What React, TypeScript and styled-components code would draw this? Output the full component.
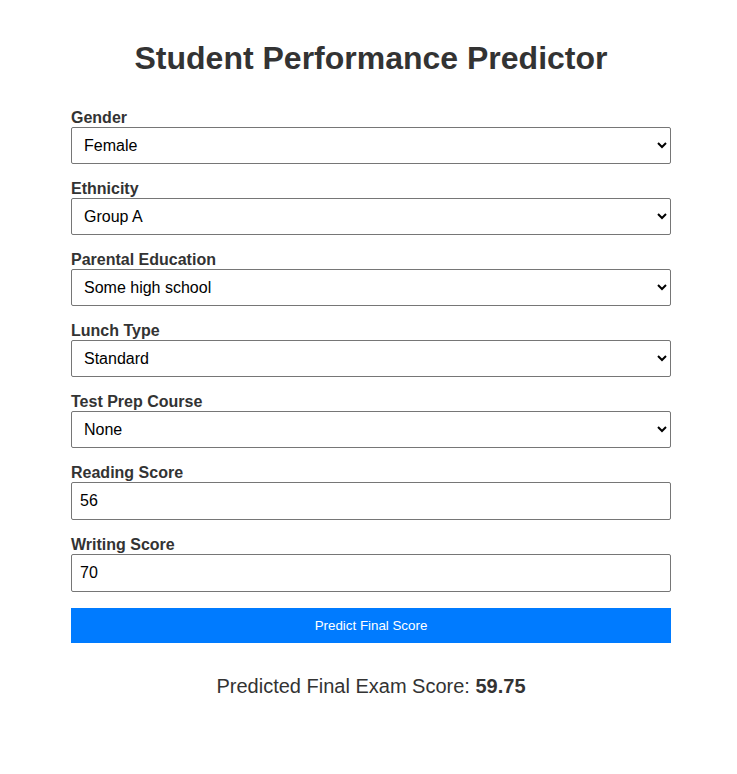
import styled, { createGlobalStyle } from "styled-components";

const GlobalStyle = createGlobalStyle`
    body {
        margin: 0;
        background: #fff;
        font-family: "Liberation Sans", Arial, sans-serif;
        color: #333;
    }
`;

type Option = { label: string; value: string };

const selects: { id: string; label: string; options: Option[] }[] = [
    {
        id: "gender",
        label: "Gender",
        options: [
            { label: "Female", value: "female" },
            { label: "Male", value: "male" },
        ],
    },
    {
        id: "ethnicity",
        label: "Ethnicity",
        options: ["A", "B", "C", "D", "E"].map((g) => ({ label: `Group ${g}`, value: g })),
    },
    {
        id: "parental",
        label: "Parental Education",
        options: [
            { label: "Some high school", value: "some high school" },
            { label: "High school", value: "high school" },
            { label: "Some college", value: "some college" },
            { label: "Associate's degree", value: "associate's degree" },
            { label: "Bachelor's degree", value: "bachelor's degree" },
            { label: "Master's degree", value: "master's degree" },
        ],
    },
    {
        id: "lunch",
        label: "Lunch Type",
        options: [
            { label: "Standard", value: "standard" },
            { label: "Free/Reduced", value: "free/reduced" },
        ],
    },
    {
        id: "prep",
        label: "Test Prep Course",
        options: [
            { label: "None", value: "none" },
            { label: "Completed", value: "completed" },
        ],
    },
];

const scores = [
    { id: "reading", label: "Reading Score", value: 56 },
    { id: "writing", label: "Writing Score", value: 70 },
];

export default function App() {
    return (
        <>
            <GlobalStyle />
            <Page>
                <Container>
                    <Title>Student Performance Predictor</Title>
                    <Form onSubmit={(e) => e.preventDefault()}>
                        {selects.map((s) => (
                            <Field key={s.id}>
                                <Label htmlFor={s.id}>{s.label}</Label>
                                <Select id={s.id} defaultValue={s.options[0].value}>
                                    {s.options.map((o) => (
                                        <option key={o.value} value={o.value}>
                                            {o.label}
                                        </option>
                                    ))}
                                </Select>
                            </Field>
                        ))}
                        {scores.map((s) => (
                            <Field key={s.id}>
                                <Label htmlFor={s.id}>{s.label}</Label>
                                <Input id={s.id} type="number" defaultValue={s.value} />
                            </Field>
                        ))}
                        <Button type="submit">Predict Final Score</Button>
                    </Form>
                    <Result>
                        Predicted Final Exam Score: <strong>59.75</strong>
                    </Result>
                </Container>
            </Page>
        </>
    );
}

const Page = styled.div`
    display: flex;
    justify-content: center;
    padding: 0 0 40px 5px;
`;

const Container = styled.main`
    width: 600px;
    display: flex;
    flex-direction: column;
`;

const Title = styled.h1`
    margin: 40px 0 32px;
    text-align: center;
    font-size: 32px;
    font-weight: 700;
    color: #333;
`;

const Form = styled.form`
    display: flex;
    flex-direction: column;
`;

const Field = styled.div`
    display: flex;
    flex-direction: column;
    margin-bottom: 16px;
`;

const Label = styled.label`
    font-size: 16px;
    font-weight: 700;
    line-height: 18px;
    color: #333;
`;

const Select = styled.select`
    box-sizing: border-box;
    width: 100%;
    height: 37px;
    padding: 0 8px;
    font-family: "Liberation Sans", Arial, sans-serif;
    font-size: 16px;
    color: #000;
    background: #fff;
    border: 1px solid #767676;
    border-radius: 2px;
`;

const Input = styled.input`
    box-sizing: border-box;
    width: 100%;
    height: 38px;
    padding: 0 8px;
    font-family: "Liberation Sans", Arial, sans-serif;
    font-size: 16px;
    color: #000;
    border: 1px solid #767676;
    border-radius: 2px;
    -moz-appearance: textfield;

    &::-webkit-outer-spin-button,
    &::-webkit-inner-spin-button {
        -webkit-appearance: none;
        margin: 0;
    }
`;

const Button = styled.button`
    height: 35px;
    padding: 10px;
    border: none;
    background: #007bff;
    color: #fff;
    font-family: "Liberation Sans", Arial, sans-serif;
    font-size: 13.333px;
    cursor: pointer;
`;

const Result = styled.p`
    margin: 32px 0 0;
    text-align: center;
    font-size: 20px;
    line-height: 23px;
    color: #333;

    strong {
        font-weight: 700;
    }
`;
